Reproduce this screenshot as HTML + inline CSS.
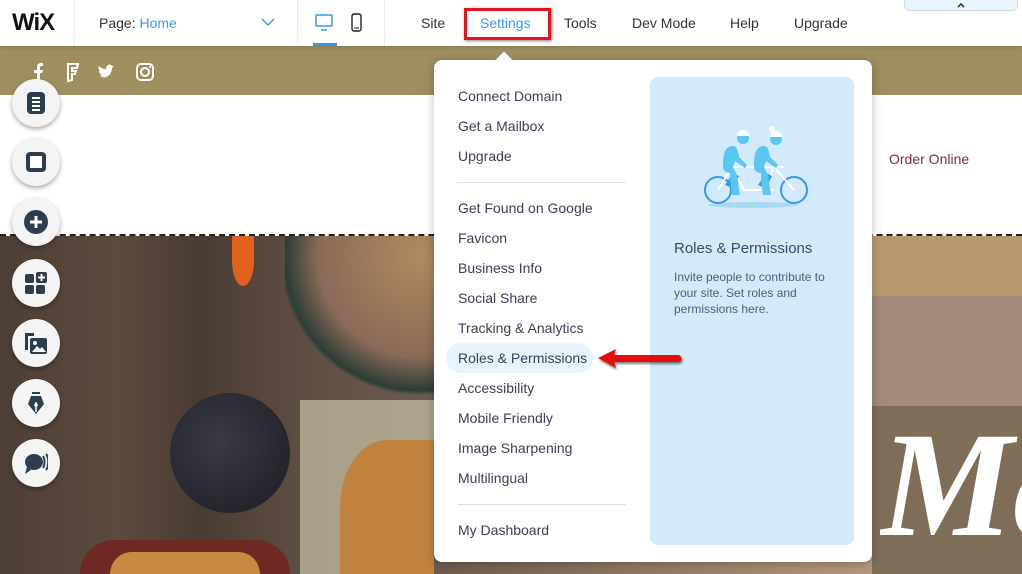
<!DOCTYPE html>
<html><head><meta charset="utf-8"><style>
*{margin:0;padding:0;box-sizing:border-box}
html,body{width:1022px;height:574px;overflow:hidden}
body{position:relative;font-family:"Liberation Sans",sans-serif;background:#fff}
#wrap{position:absolute;left:0;top:0;width:1022px;height:574px;overflow:hidden}
.abs{position:absolute}
.top{left:0;top:0;width:1022px;height:46px;background:#fff;box-shadow:0 2px 4px rgba(0,0,0,.12);z-index:5}
.top span{position:absolute;top:15px;font-size:14px;color:#333}
.vline{position:absolute;top:0;width:1px;height:46px;background:#e3eef8}
.band{left:0;top:46px;width:1022px;height:49px;background:#9e8f5f}
.photo{left:0;top:236px;width:1022px;height:338px;background:linear-gradient(90deg,#4e3f36 0,#5c4a3e 120px,#4a3c33 200px,#5e4d42 300px,#6b5a4d 420px,#b7987d 870px,#a78c74 1022px)}
.dash{left:0;top:234px;width:1022px;height:0;border-top:2px dashed #222}
.btn{position:absolute;left:12px;width:48px;height:48px;border-radius:50%;background:#f4f4f4;box-shadow:0 2px 5px rgba(0,0,0,.35);z-index:6}
.btn svg{position:absolute;left:12px;top:12px}
.menu{left:434px;top:60px;width:438px;height:502px;background:#fff;border-radius:8px;box-shadow:0 2px 10px rgba(0,0,0,.25);z-index:7}
.item{position:absolute;left:24px;font-size:14px;color:#3b4057}
.sep{position:absolute;left:24px;width:168px;height:1px;background:#d5dee6}
.panel{position:absolute;left:216px;top:17px;width:204px;height:468px;background:#d3eafc;border-radius:8px}
</style></head><body><div id="wrap">
<div class="abs top">
 <span style="left:12px;top:9px;font-size:24px;font-weight:bold;color:#111;letter-spacing:-1px">WiX</span>
 <div class="vline" style="left:74px"></div>
 <span style="left:99px">Page: <span style="position:static;color:#3899ec">Home</span></span>
 <svg class="abs" style="left:261px;top:17px" width="14" height="10"><path d="M1 2l6 6 6-6" stroke="#3899ec" stroke-width="1.5" fill="none"/></svg>
 <div class="vline" style="left:297px"></div>
 <svg class="abs" style="left:315px;top:14px" width="20" height="18"><rect x="1" y="1" width="16" height="11" rx="1" stroke="#3899ec" stroke-width="1.5" fill="none"/><path d="M6 16h6" stroke="#3899ec" stroke-width="1.5"/></svg>
 <div class="abs" style="left:313px;top:43px;width:24px;height:3px;background:#3899ec"></div>
 <svg class="abs" style="left:351px;top:13px" width="12" height="20"><rect x="1" y="1" width="9" height="17" rx="2" stroke="#222" stroke-width="1.4" fill="none"/><path d="M3 15h5" stroke="#222"/></svg>
 <div class="vline" style="left:384px"></div>
 <span style="left:421px">Site</span>
 <span style="left:480px;color:#3899ec">Settings</span>
 <div class="abs" style="left:464px;top:8px;width:87px;height:32px;border:3px solid #e8101a;box-shadow:1px 1px 3px rgba(0,0,0,.5)"></div>
 <span style="left:564px">Tools</span>
 <span style="left:632px">Dev Mode</span>
 <span style="left:730px">Help</span>
 <span style="left:794px">Upgrade</span>
 <div class="abs" style="left:904px;top:0;width:114px;height:11px;background:#eaf4fd;border:1px solid #c9ddef;border-top:0;border-radius:0 0 6px 6px"><svg class="abs" style="left:52px;top:2px" width="8" height="6"><path d="M1 5l3-3 3 3" stroke="#222" stroke-width="1.5" fill="none"/></svg></div>
</div>
<div class="abs band"></div>
<svg class="abs" style="left:28px;top:62px" width="140" height="20">
 <path d="M9 19V11H6V8h3V5c0-3 2-4 4-4h2v3h-1c-1 0-2 1-2 1v3h3l-1 3h-2v8z" fill="#fff"/>
 <path d="M40 2h10l-1 4h-5v3h4l-1 3h-3v6l-4 1z" fill="none" stroke="#fff" stroke-width="2"/>
 <path d="M72 15c6 2 12-2 12-9l2-2-2 0c-1-2-4-2-5 0-1 1-1 2-1 3-3 0-5-1-7-3-1 2 0 4 1 5h-1c0 2 1 3 3 4-1 0-1 0-2 0 1 1 2 2 4 2-1 1-3 1-4 0z" fill="#fff"/>
 <rect x="109" y="2" width="16" height="16" rx="4" fill="none" stroke="#fff" stroke-width="2"/><circle cx="117" cy="10" r="4" fill="none" stroke="#fff" stroke-width="2"/><circle cx="122" cy="5" r="1" fill="#fff"/>
</svg>
<div class="abs" style="left:889px;top:151px;font-size:14px;color:#7a2850">Order Online</div>
<div class="abs photo"></div>
<div class="abs" style="left:170px;top:393px;width:120px;height:120px;border-radius:50%;background:radial-gradient(circle at 40% 40%,#3a3a42,#1c1c24)"></div>
<div class="abs" style="left:285px;top:236px;width:149px;height:200px;background:radial-gradient(circle at 90% 10%,#b08a5e 0,#8a6a58 45%,#2c3d36 60%,transparent 62%)"></div>
<div class="abs" style="left:300px;top:400px;width:134px;height:174px;background:#c9c3a8;opacity:.7"></div>
<div class="abs" style="left:340px;top:440px;width:94px;height:134px;border-radius:50% 0 0 0;background:#c0823e"></div>
<div class="abs" style="left:80px;top:540px;width:210px;height:34px;border-radius:105px 105px 0 0;background:#6e2a22"></div>
<div class="abs" style="left:110px;top:552px;width:150px;height:22px;border-radius:75px 75px 0 0;background:#c88a40"></div>
<div class="abs" style="left:232px;top:236px;width:22px;height:50px;border-radius:0 0 50% 50%;background:#e0621e"></div>
<div class="abs" style="left:872px;top:236px;width:150px;height:60px;background:#b89a6e"></div>
<div class="abs" style="left:872px;top:296px;width:150px;height:110px;background:#a48a78"></div>
<div class="abs" style="left:872px;top:406px;width:150px;height:168px;background:#7e6e58"></div>
<div class="abs" style="left:880px;top:410px;height:164px;overflow:hidden;font-family:'Liberation Serif',serif;font-style:italic;font-weight:bold;font-size:150px;color:#fff;line-height:1">Ma</div>
<div class="abs dash"></div>

<div class="btn" style="top:79px"><svg width="24" height="24"><rect x="3" y="1" width="18" height="22" rx="4" fill="#2b3d4f"/><path d="M8 7h8M8 11h8M8 15h8M8 19h8" stroke="#fff" stroke-width="2"/></svg></div>
<div class="btn" style="top:138px"><svg width="24" height="24"><rect x="2" y="2" width="20" height="20" rx="4" fill="#2b3d4f"/><rect x="6" y="6" width="12" height="12" fill="#fff"/></svg></div>
<div class="btn" style="top:198px"><svg width="24" height="24"><circle cx="12" cy="12" r="12" fill="#2b3d4f"/><path d="M12 6v12M6 12h12" stroke="#fff" stroke-width="3"/></svg></div>
<div class="btn" style="top:259px"><svg width="24" height="24"><rect x="1" y="3" width="9" height="9" rx="2" fill="#2b3d4f"/><rect x="1" y="14" width="9" height="9" rx="2" fill="#2b3d4f"/><rect x="12" y="14" width="9" height="9" rx="2" fill="#2b3d4f"/><rect x="12" y="1" width="11" height="11" rx="2" fill="#2b3d4f"/><path d="M17.5 3v7M14 6.5h7" stroke="#fff" stroke-width="2"/></svg></div>
<div class="btn" style="top:319px"><svg width="24" height="24"><path d="M1 2h9v3H4v14H1z" fill="#2b3d4f"/><rect x="6" y="7" width="17" height="16" rx="2" fill="#2b3d4f"/><path d="M8 21l5-6 3 3 2-2 4 5z" fill="#fff"/><circle cx="11" cy="12" r="2" fill="#fff"/></svg></div>
<div class="btn" style="top:379px"><svg width="24" height="24"><path d="M8 1h8v2H8z" fill="#2b3d4f"/><path d="M7 5h10l3 8-8 10-8-10z" fill="#2b3d4f"/><path d="M12 11v10" stroke="#fff" stroke-width="1.5"/><circle cx="12" cy="14" r="1.8" fill="#fff"/></svg></div>
<div class="btn" style="top:439px"><svg width="24" height="24"><ellipse cx="10" cy="11" rx="9" ry="8" fill="#2b3d4f"/><path d="M3 16l-2 7 6-4z" fill="#2b3d4f"/><path d="M19 5c2 3 2 9 0 12M22 3c3 4 3 12 0 16" stroke="#2b3d4f" stroke-width="2" fill="none"/></svg></div>

<div class="abs menu">
 <div class="abs" style="left:64px;top:-6px;width:12px;height:12px;background:#fff;transform:rotate(45deg)"></div>
 <div class="item" style="top:28px">Connect Domain</div>
 <div class="item" style="top:58px">Get a Mailbox</div>
 <div class="item" style="top:88px">Upgrade</div>
 <div class="sep" style="top:122px"></div>
 <div class="item" style="top:140px">Get Found on Google</div>
 <div class="item" style="top:170px">Favicon</div>
 <div class="item" style="top:200px">Business Info</div>
 <div class="item" style="top:230px">Social Share</div>
 <div class="item" style="top:260px">Tracking &amp; Analytics</div>
 <div class="abs" style="left:12px;top:283px;width:147px;height:30px;border-radius:15px;background:#e7f3fd"></div>
 <div class="item" style="top:290px">Roles &amp; Permissions</div>
 <div class="item" style="top:320px">Accessibility</div>
 <div class="item" style="top:350px">Mobile Friendly</div>
 <div class="item" style="top:380px">Image Sharpening</div>
 <div class="item" style="top:410px">Multilingual</div>
 <div class="sep" style="top:444px"></div>
 <div class="item" style="top:462px">My Dashboard</div>
 <div class="panel">
  <svg class="abs" style="left:48px;top:40px" width="110" height="95">
   <ellipse cx="55" cy="88" rx="45" ry="3" fill="#a9d8f3"/>
   <circle cx="20" cy="73" r="13" fill="none" stroke="#3899ec" stroke-width="2"/>
   <circle cx="96" cy="73" r="13" fill="none" stroke="#3899ec" stroke-width="2"/>
   <path d="M20 73l14-23h42l20 23M34 50l12 23h30M76 50l-10 23M48 50h38" stroke="#fff" stroke-width="1.8" fill="none"/>
   <path d="M27 68l8-12 6 3-6 12zM60 68l8-12 6 3-6 12z" fill="#3899ec"/>
   <path d="M35 29c-8 0-10 8-10 20 0 5 3 7 7 7 0 8 1 16 2 22h8l-3-20-4-8 2-6 10 7 2-3-8-8c-1-8-3-11-6-11z" fill="#5cc6f2"/>
   <path d="M66 29c-8 0-10 8-10 20 0 5 3 7 7 7 0 8 1 16 2 22h8l-3-20-4-8 2-6 10 7 2-3-8-8c-1-8-3-11-6-11z" fill="#5cc6f2"/>
   <circle cx="45" cy="21" r="6" fill="#5cc6f2"/><path d="M39 19a6 6 0 0 1 12 0z" fill="#fff"/>
   <circle cx="78" cy="22" r="6" fill="#5cc6f2"/><path d="M72 20a6 6 0 0 1 12 0z" fill="#fff"/><circle cx="74" cy="12" r="3" fill="#fff"/>
  </svg>
  <div class="abs" style="left:24px;top:163px;font-size:15px;color:#3b4a63">Roles &amp; Permissions</div>
  <div class="abs" style="left:24px;top:192px;width:170px;font-size:12px;line-height:16px;color:#4f5d73">Invite people to contribute to your site. Set roles and permissions here.</div>
 </div>
 <svg class="abs" style="left:160px;top:287px;filter:drop-shadow(1px 2px 1px rgba(0,0,0,.5))" width="92" height="24"><path d="M4 11L22 2l-2 6h64a3 3 0 0 1 0 7H20l2 6z" fill="#e50d0d"/></svg>
</div>
</div></body></html>
